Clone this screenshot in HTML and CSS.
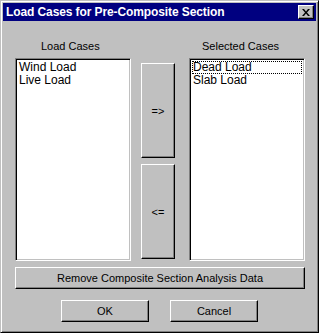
FILE: index.html
```html
<!DOCTYPE html>
<html lang="en">
<head>
  <meta charset="UTF-8" />
  <title>Load Cases for Pre-Composite Section</title>
  <link rel="stylesheet" href="styles.css">
</head>
<body>

  <div class="window">
    <div class="titlebar">
      <span class="title">Load Cases for Pre-Composite Section</span>
      <button class="close-btn" aria-label="Close">
        <svg width="8" height="7" viewBox="0 0 8 7">
          <path d="M0 0h2l2 2.5L6 0h2L5 3.5 8 7H6L4 4.5 2 7H0l3-3.5z" fill="#000"/>
        </svg>
      </button>
    </div>

    <div class="content">
      <div class="lists">
        <div class="col">
          <div class="label">Load Cases</div>
          <div class="listbox">
            <div class="item">Wind Load</div>
            <div class="item">Live Load</div>
          </div>
        </div>

        <div class="movers">
          <button class="btn mover">=&gt;</button>
          <button class="btn mover">&lt;=</button>
        </div>

        <div class="col">
          <div class="label label-right">Selected Cases</div>
          <div class="listbox">
            <div class="item focused">Dead Load</div>
            <div class="item">Slab Load</div>
          </div>
        </div>
      </div>

      <button class="btn wide">Remove Composite Section Analysis Data</button>

      <div class="actions">
        <button class="btn action">OK</button>
        <button class="btn action">Cancel</button>
      </div>
    </div>
  </div>

</body>
</html>
```

FILE: styles.css
```css
* {
  box-sizing: border-box;
}

body {
  margin: 0;
  font-family: 'Liberation Sans', Arial, sans-serif;
  font-size: 11px;
  color: #000;
  background: #c0c0c0;
}

.window {
  width: 319px;
  height: 333px;
  background: #c0c0c0;
  border: 1px solid;
  border-color: #c0c0c0 #000 #000 #c0c0c0;
  box-shadow: inset 1px 1px #fff, inset -1px -1px #808080;
  padding: 2px;
}

.titlebar {
  height: 18px;
  background: #000080;
  color: #fff;
  display: flex;
  align-items: center;
  padding: 0 2px 0 3px;
}

.title {
  flex: 1;
  font-weight: bold;
  font-size: 12px;
  letter-spacing: -0.1px;
}

.close-btn {
  width: 16px;
  height: 14px;
  padding: 0;
  background: #c0c0c0;
  border: 1px solid;
  border-color: #fff #000 #000 #fff;
  box-shadow: inset -1px -1px #808080;
  display: flex;
  align-items: center;
  justify-content: center;
}

.content {
  padding: 0 10px 0 12px;
}

.lists {
  display: flex;
  padding-top: 19px;
}

.col {
  width: 116px;
  display: flex;
  flex-direction: column;
}

.label {
  height: 18px;
  line-height: 13px;
  padding-left: 26px;
}

.label-right {
  padding-left: 13px;
}

.listbox {
  height: 203px;
  background: #fff;
  border: 1px solid;
  border-color: #808080 #fff #fff #808080;
  box-shadow: inset 1px 1px #000, inset -1px -1px #c0c0c0;
  padding: 2px;
}

.item {
  height: 13px;
  line-height: 13px;
  padding-left: 1px;
  font-size: 12px;
}

.item.focused {
  outline: 1px dotted #000;
  outline-offset: -1px;
}

.movers {
  width: 34px;
  margin: 23px 14px 0 10px;
  display: flex;
  flex-direction: column;
  gap: 6px;
}

.btn {
  font-family: inherit;
  font-size: 11px;
  color: #000;
  background: #c0c0c0;
  border: 1px solid;
  border-color: #fff #000 #000 #fff;
  box-shadow: inset -1px -1px #808080;
  padding: 0;
}

.mover {
  height: 95px;
}

.wide {
  display: block;
  width: 290px;
  height: 22px;
  margin-top: 6px;
}

.actions {
  display: flex;
  justify-content: center;
  gap: 21px;
  margin-top: 11px;
  padding-right: 2px;
}

.action {
  width: 88px;
  height: 22px;
}
```
